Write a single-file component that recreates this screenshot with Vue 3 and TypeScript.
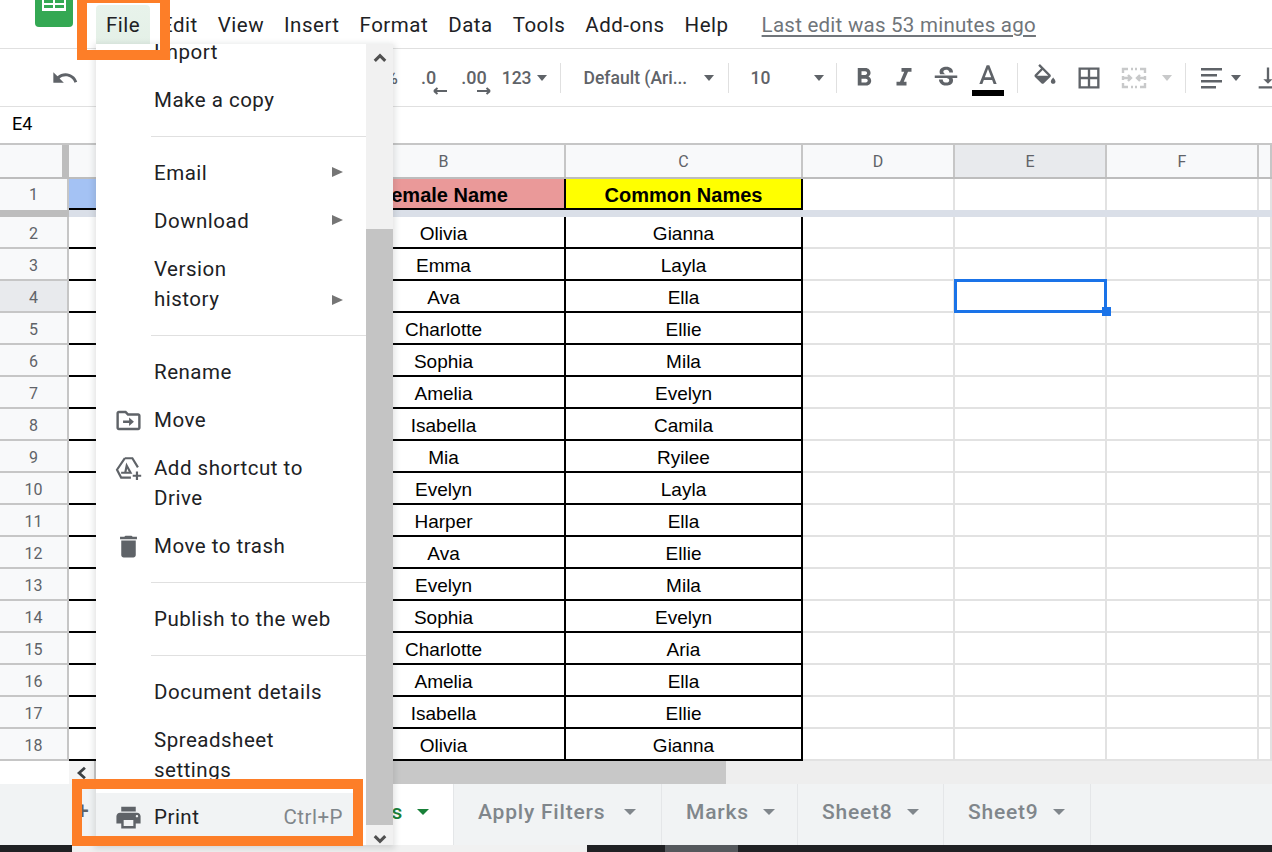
<script setup lang="ts">
const menus = ['Edit', 'View', 'Insert', 'Format', 'Data', 'Tools', 'Add-ons', 'Help']

const columns = ['', 'B', 'C', 'D', 'E', 'F', '']

const people: [string, string][] = [
  ['Olivia', 'Gianna'], ['Emma', 'Layla'], ['Ava', 'Ella'], ['Charlotte', 'Ellie'],
  ['Sophia', 'Mila'], ['Amelia', 'Evelyn'], ['Isabella', 'Camila'], ['Mia', 'Ryilee'],
  ['Evelyn', 'Layla'], ['Harper', 'Ella'], ['Ava', 'Ellie'], ['Evelyn', 'Mila'],
  ['Sophia', 'Evelyn'], ['Charlotte', 'Aria'], ['Amelia', 'Ella'], ['Isabella', 'Ellie'],
  ['Olivia', 'Gianna'],
]

const sheets = [
  { name: 'Apply Filters', width: 208, gap: 19 },
  { name: 'Marks', width: 136, gap: 14 },
  { name: 'Sheet8', width: 146, gap: 14 },
  { name: 'Sheet9', width: 147, gap: 14 },
]
</script>

<template>
  <div class="app">
    <header class="menubar">
      <div class="logo"><div class="logo-grid"><span /><span /><span /><span /></div></div>
      <div class="menu-file">File</div>
      <nav class="menu-list">
        <span v-for="m in menus" :key="m">{{ m }}</span>
      </nav>
      <a class="last-edit">Last edit was 53 minutes ago</a>
    </header>

    <div class="toolbar">
      <svg class="ico undo" viewBox="0 0 24 24"><path d="M12.5 8c-2.65 0-5.05.99-6.9 2.6L2 7v9h9l-3.62-3.62c1.39-1.16 3.16-1.88 5.12-1.88 3.54 0 6.55 2.31 7.6 5.5l2.37-.78C21.08 11.03 17.15 8 12.5 8z" /></svg>
      <span class="tb-text percent">%</span>
      <div class="decimal dec-less">.0<svg viewBox="0 0 14 8"><path d="M1 4h13M1 4l3.500-3M1 4l3.500 3" /></svg></div>
      <div class="decimal dec-more">.00<svg viewBox="0 0 14 8"><path d="M0 4h13M13 4L9.500 1M13 4L9.500 7" /></svg></div>
      <span class="tb-text num">123</span>
      <i class="caret caret-num" />
      <i class="tb-sep sep-a" />
      <span class="tb-text font">Default (Ari...</span>
      <i class="caret caret-font" />
      <i class="tb-sep sep-b" />
      <span class="tb-text size">10</span>
      <i class="caret caret-size" />
      <i class="tb-sep sep-c" />
      <svg class="ico bold" viewBox="0 0 24 24"><path d="M15.6 10.79c.97-.67 1.65-1.77 1.65-2.79 0-2.26-1.75-4-4-4H7v14h7.04c2.09 0 3.71-1.7 3.71-3.79 0-1.52-.86-2.82-2.15-3.42zM10 6.5h3c.83 0 1.5.67 1.5 1.5s-.67 1.5-1.5 1.5h-3v-3zm3.5 9H10v-3h3.5c.83 0 1.5.67 1.5 1.5s-.67 1.5-1.5 1.5z" /></svg>
      <svg class="ico italic" viewBox="0 0 24 24"><path d="M10 4v3h2.210l-3.420 8H6v3h8v-3h-2.210l3.420-8H18V4z" /></svg>
      <svg class="ico strike" viewBox="0 0 24 24"><path d="M6.85 7.08C6.85 4.37 9.45 3 12.24 3c1.64 0 3 .49 3.9 1.28.77.65 1.46 1.73 1.46 3.24h-3.01c0-.31-.05-.59-.15-.85-.29-.86-1.2-1.28-2.25-1.28-1.86 0-2.34 1.02-2.34 1.7 0 .48.25.88.74 1.21.38.25.77.48 1.41.7H7.39c-.21-.34-.54-.89-.54-1.92zM21 12v-2H3v2h9.62c1.15.45 1.96.75 1.96 1.97 0 1-.81 1.67-2.28 1.67-1.54 0-2.93-.54-2.93-2.51H6.4c0 .55.08 1.13.24 1.58.81 2.29 3.29 3.3 5.67 3.3 2.27 0 5.3-.89 5.3-4.05 0-.3-.01-1.16-.48-1.94H21V12z" /></svg>
      <div class="text-color">
        <svg viewBox="0 0 24 18"><path d="M11 1L5.500 15h2.250l1.120-3h6.250l1.120 3h2.250L13 1h-2zm-1.380 9L12 3.670 14.380 10H9.620z" /></svg>
        <i />
      </div>
      <i class="tb-sep sep-d" />
      <svg class="ico fill" viewBox="0 0 24 24"><path d="M16.56 8.94L7.62 0 6.21 1.41l2.38 2.38-5.15 5.15c-.59.59-.59 1.54 0 2.12l5.5 5.5c.29.29.68.44 1.06.44s.77-.15 1.06-.44l5.5-5.5c.59-.58.59-1.53 0-2.12zM5.21 10L10 5.21 14.79 10H5.21zM19 11.5s-2 2.17-2 3.5c0 1.1.9 2 2 2s2-.9 2-2c0-1.33-2-3.5-2-3.5z" /></svg>
      <svg class="ico borders" viewBox="0 0 24 24"><path d="M3 3v18h18V3H3zm8 16H5v-6h6v6zm0-8H5V5h6v6zm8 8h-6v-6h6v6zm0-8h-6V5h6v6z" /></svg>
      <svg class="ico merge" viewBox="0 0 28 24"><path d="M8 3H3v4M20 3h5v4M8 21H3v-4M20 21h5v-4M3 10v4M25 10v4M11 3h2M15 3h2M11 21h2M15 21h2" /><path d="M4 12h7M8 9l3 3-3 3M24 12h-7M20 9l-3 3 3 3" /></svg>
      <i class="caret caret-merge" />
      <i class="tb-sep sep-e" />
      <svg class="ico align" viewBox="0 0 24 24"><path d="M2 2h21v2.400H2zM2 8h16v2.400H2zM2 14h21v2.400H2zM2 20h15v2.400H2z" /></svg>
      <i class="caret caret-align" />
      <svg class="ico valign" viewBox="0 0 24 24"><path d="M16 13h-3V3h-2v10H8l4 4 4-4zM4 19v2h16v-2H4z" /></svg>
    </div>

    <div class="formula-bar">E4</div>

    <div class="row col-head">
      <div class="corner" />
      <div v-for="(c, i) in columns" :key="i" class="col-cell" :class="{ on: c === 'E' }">{{ c }}</div>
    </div>

    <div class="row title-row">
      <div class="row-no">1</div>
      <div class="cell title blue" />
      <div class="cell title pink">Female Name</div>
      <div class="cell title yellow">Common Names</div>
      <div class="cell" /><div class="cell" /><div class="cell" /><div class="cell" />
    </div>
    <div class="freeze-bar"><i /></div>

    <div v-for="(p, i) in people" :key="i" class="row body-row">
      <div class="row-no" :class="{ on: i === 2 }">{{ i + 2 }}</div>
      <div class="cell ruled" />
      <div class="cell ruled">{{ p[0] }}</div>
      <div class="cell ruled right">{{ p[1] }}</div>
      <div class="cell" />
      <div class="cell"><div v-if="i === 2" class="selection" /></div>
      <div class="cell" />
      <div class="cell" />
    </div>

    <div class="hscroll">
      <div class="hscroll-btn"><svg viewBox="0 0 12 12"><path d="M8.500 1.500 3.500 6l5 4.500" /></svg></div>
      <div class="hscroll-thumb" />
    </div>

    <div class="tabbar">
      <span class="add-sheet">+</span>
      <div class="tab active">Common Names<i /></div>
      <div
        v-for="s in sheets"
        :key="s.name"
        class="tab"
        :style="{ width: s.width + 'px', gap: s.gap + 'px' }"
      >{{ s.name }}<i /></div>
    </div>

    <div class="taskbar"><i class="tb-light" /><i class="tb-dark" /><i class="tb-grey" /></div>

    <aside class="file-menu">
      <div class="menu-body">
        <div class="menu-scroll">
          <div class="mi">Import</div>
          <div class="mi">Make a copy</div>
          <hr>
          <div class="mi sub">Email</div>
          <div class="mi sub">Download</div>
          <div class="mi sub tall">Version<br>history</div>
          <hr>
          <div class="mi">Rename</div>
          <div class="mi">
            <svg class="mi-ico" viewBox="0 0 24 24"><path d="M20 6h-8l-2-2H4c-1.100 0-1.990.9-1.990 2L2 18c0 1.100.9 2 2 2h16c1.100 0 2-.9 2-2V8c0-1.100-.9-2-2-2zm0 12H4V6h5.170l2 2H20v10z" /><path d="M7.500 12h5V9.500l4 3.500-4 3.500V14h-5z" /></svg>
            Move
          </div>
          <div class="mi tall">
            <svg class="mi-ico shortcut" viewBox="0 0 24 24"><path d="M9 3.500h6.200l4.600 7.600M9 3.500 2.500 13l3.400 6.500H14M9.500 15.500H5.900M9.300 15.500h4.400L10.500 9.600z" /><path d="M19 14.500v7M15.500 18h7" /></svg>
            Add shortcut to<br>Drive
          </div>
          <div class="mi">
            <svg class="mi-ico" viewBox="0 0 24 24"><path d="M6 19c0 1.100.9 2 2 2h8c1.100 0 2-.9 2-2V7H6v12zM19 4h-3.500l-1-1h-5l-1 1H5v2h14V4z" /></svg>
            Move to trash
          </div>
          <hr>
          <div class="mi">Publish to the web</div>
          <hr>
          <div class="mi">Document details</div>
          <div class="mi tall">Spreadsheet<br>settings</div>
        </div>
        <div class="mi print">
          <svg class="mi-ico" viewBox="0 0 24 24"><path d="M19 8H5c-1.660 0-3 1.340-3 3v6h4v4h12v-4h4v-6c0-1.660-1.340-3-3-3zm-3 11H8v-5h8v5zm3-7c-.55 0-1-.45-1-1s.45-1 1-1 1 .45 1 1-.45 1-1 1zm-1-9H6v4h12V3z" /></svg>
          Print
          <span class="shortcut-key">Ctrl+P</span>
        </div>
      </div>
      <div class="menu-bar">
        <svg viewBox="0 0 12 8"><path d="M1.500 6.500 6 2l4.500 4.500" /></svg>
        <div class="menu-thumb" />
        <svg viewBox="0 0 12 8"><path d="M1.500 1.500 6 6l4.500-4.500" /></svg>
      </div>
    </aside>

    <div class="callout callout-file" />
    <div class="callout callout-print" />
  </div>
</template>

<style scoped>
.app {
  position: relative;
  width: 1272px;
  height: 852px;
  overflow: hidden;
  background: #fff;
  font-family: Roboto, "Liberation Sans", sans-serif;
  color: #202124;
}

.menubar {
  display: flex;
  align-items: flex-start;
  height: 48px;
  border-bottom: 1px solid #e0e0e0;
  font-size: 20.5px;
  letter-spacing: 0.5px;
  line-height: 28px;
}
.logo {
  display: flex;
  justify-content: center;
  width: 38px;
  height: 27px;
  margin: 0 23px 0 35px;
  background: #34a853;
  border-radius: 0 0 4px 4px;
}
.logo-grid {
  display: grid;
  grid-template-columns: 9px 9px;
  grid-template-rows: 3px 3px;
  gap: 2px;
  justify-content: center;
  width: 24px;
  height: 11px;
  background: #fff;
}
.logo-grid span { background: #34a853; }
.menu-file {
  width: 54px;
  height: 39px;
  margin-top: 5px;
  padding: 6px 0 0 10px;
  box-sizing: border-box;
  background: linear-gradient(#e8f3eb, #e4f0e7);
  border-radius: 4px 4px 0 0;
}
.menu-list {
  display: flex;
  gap: 20px;
  margin: 11px 0 0 11px;
}
.last-edit {
  margin: 11px 0 0 33px;
  letter-spacing: 0.25px;
  color: #70757a;
  text-decoration: underline;
  text-underline-offset: 3px;
}

.toolbar {
  display: flex;
  align-items: center;
  height: 57px;
  padding-left: 51px;
  border-bottom: 1px solid #e0e0e0;
  color: #5f6368;
}
.ico { flex: none; width: 28px; height: 28px; fill: #5f6368; }
.tb-text { flex: none; font-size: 17.5px; font-weight: 500; }
.percent { margin-left: 306px; width: 15px; }
.decimal {
  position: relative;
  flex: none;
  font-size: 18px;
  font-weight: 500;
  line-height: 30px;
  height: 30px;
}
.decimal svg {
  position: absolute;
  bottom: -2px;
  width: 14px;
  height: 8px;
  fill: none;
  stroke: #5f6368;
  stroke-width: 2;
}
.dec-less { margin-left: 21px; }
.dec-less svg { left: 12px; }
.dec-more { margin-left: 25px; }
.dec-more svg { left: 16px; }
.num { margin-left: 15px; }
.caret {
  flex: none;
  width: 0;
  height: 0;
  border: 5.5px solid transparent;
  border-top: 6px solid #5f6368;
  border-bottom: 0;
}
.caret-num { margin-left: 5px; }
.tb-sep { flex: none; width: 1px; height: 30px; background: #e0e0e0; }
.sep-a { margin-left: 13px; }
.font { margin-left: 23px; width: 104px; white-space: nowrap; }
.caret-font { margin-left: 16px; }
.sep-b { margin-left: 14px; }
.size { margin-left: 22px; width: 22px; }
.caret-size { margin-left: 41px; }
.sep-c { margin-left: 12px; }
.bold { margin-left: 12px; width: 30px; height: 30px; }
.italic { margin-left: 10px; width: 30px; height: 30px; }
.strike { margin-left: 12px; width: 30px; height: 30px; }
.text-color { flex: none; align-self: flex-start; width: 32px; margin: 15px 0 0 11px; }
.text-color svg { display: block; width: 32px; height: 24px; margin-bottom: 2px; fill: #5f6368; }
.text-color i { display: block; height: 6px; background: #000; }
.sep-d { margin-left: 13px; }
.fill { margin-left: 13px; }
.borders { margin-left: 16.5px; }
.merge { margin-left: 16.5px; fill: none; stroke: #c8c9ca; stroke-width: 2.4; }
.caret-merge { margin-left: 14px; border-top-color: #c8c9ca; }
.sep-e { margin-left: 13px; }
.align { margin-left: 13px; width: 24px; height: 24px; }
.caret-align { margin-left: 8px; }
.valign { margin-left: 13px; }

.formula-bar {
  height: 36px;
  padding-left: 12px;
  line-height: 33px;
  font-size: 18px;
  color: #000;
}

.row {
  display: grid;
  grid-template-columns: 69px 254px 243px 237px 152px 152px 152px 13px;
}
.col-head {
  height: 36px;
  background: #f8f9fa;
  border-top: 2px solid #c6c6c6;
  border-bottom: 2px solid #bdbdbd;
  box-sizing: border-box;
  font-size: 16px;
  color: #5f6368;
}
.corner { border-right: 7px solid #bdbdbd; }
.col-cell {
  display: flex;
  align-items: center;
  justify-content: center;
  border-right: 2px solid #c6c6c6;
}
.col-cell.on { background: #e8eaed; }

.row-no {
  display: flex;
  align-items: center;
  justify-content: center;
  padding-top: 2px;
  box-sizing: border-box;
  background: #f8f9fa;
  border-right: 2px solid #c6c6c6;
  border-bottom: 2px solid #c6c6c6;
  font-size: 16px;
  color: #5f6368;
}
.row-no.on { background: #e8eaed; }
.cell {
  position: relative;
  display: flex;
  align-items: center;
  justify-content: center;
  padding-top: 4px;
  box-sizing: border-box;
  border-right: 2px solid #e2e2e2;
  border-bottom: 2px solid #e2e2e2;
  font-family: "Liberation Sans", Arial, sans-serif;
  font-size: 19px;
  color: #000;
  white-space: nowrap;
}
.title-row { height: 31px; }
.title-row .row-no { border-bottom: 0; padding-top: 0; }
.title-row .cell { border-bottom: 0; }
.title { font-size: 20px; font-weight: 700; border-bottom: 2px solid #000 !important; }
.blue { background: #a4c2f4; border-right: 0; }
.pink { background: #ea9999; border-right: 2px solid #000; }
.yellow { background: #ff0; border-right: 2px solid #000; }
.freeze-bar {
  height: 7px;
  background: #dadfe8;
}
.freeze-bar i { display: block; width: 69px; height: 7px; background: #bdbdbd; }
.body-row { height: 32px; }
.ruled { border-bottom-color: #000; border-right-color: transparent; }
.right { border-right-color: #000; }
.body-row .cell:nth-child(3) { border-right: 2px solid #000; }
.selection {
  position: absolute;
  inset: -2px -2px -2px -1px;
  z-index: 1;
  border: 3px solid #1a73e8;
}
.selection::after {
  content: "";
  position: absolute;
  right: -7px;
  bottom: -6px;
  width: 9px;
  height: 9px;
  background: #1a73e8;
}

.hscroll {
  display: flex;
  height: 23px;
  padding-left: 69px;
  background: #fff;
  box-sizing: border-box;
}
.hscroll-btn {
  width: 25px;
  background: #f5f5f5;
  display: flex;
  align-items: center;
  justify-content: center;
}
.hscroll-btn svg { width: 14px; height: 14px; fill: none; stroke: #3c4043; stroke-width: 2.4; }
.hscroll-thumb {
  width: 632px;
  background: #c8c8c8;
}
.hscroll::after {
  content: "";
  flex: 1;
  background: #eeeeee;
}

.tabbar {
  display: flex;
  height: 61px;
  background: #f1f3f4;
  align-items: stretch;
  font-size: 21px;
  letter-spacing: 0.8px;
  color: #80868b;
  font-weight: 500;
}
.add-sheet {
  width: 169px;
  padding-right: 4px;
  box-sizing: border-box;
  text-align: center;
  line-height: 54px;
  font-size: 24px;
  color: #5f6368;
}
.tab {
  display: flex;
  align-items: center;
  gap: 14px;
  padding: 0 0 5px 24px;
  box-sizing: border-box;
  border-right: 1px solid #e4e6e8;
  white-space: nowrap;
}
.tab i {
  width: 0;
  height: 0;
  border: 6px solid transparent;
  border-top: 6px solid #80868b;
  border-bottom: 0;
}
.tab.active {
  width: 285px;
  justify-content: flex-end;
  padding-right: 24px;
  background: #fff;
  color: #188038;
}
.tab.active i { border-top-color: #188038; }

.taskbar {
  display: flex;
  height: 7px;
  background: #202124;
}
.taskbar i { display: block; height: 7px; }
.tb-light { width: 515px; margin-left: 72px; background: #f1f1f1; }
.tb-dark { width: 78px; }
.tb-grey { width: 73px; background: #55585c; }

.file-menu {
  position: absolute;
  top: 44px;
  left: 96px;
  display: flex;
  width: 297px;
  height: 801px;
  background: #fff;
  box-shadow: 0 2px 6px 2px rgba(60, 64, 67, 0.15);
  font-size: 20.5px;
  letter-spacing: 0.5px;
  color: #202124;
}
.menu-body {
  display: flex;
  flex-direction: column;
  width: 270px;
  overflow: hidden;
}
.menu-scroll {
  flex: 1;
  min-height: 0;
  overflow: hidden;
  margin-top: -16px;
}
.mi {
  position: relative;
  flex: none;
  height: 48px;
  padding-left: 58px;
  line-height: 48px;
  box-sizing: border-box;
  white-space: nowrap;
}
.mi.tall { height: 78px; padding-top: 9px; line-height: 30px; }
.sub::after {
  content: "";
  position: absolute;
  right: 23px;
  top: 18px;
  border-left: 11px solid #757575;
  border-top: 5px solid transparent;
  border-bottom: 5px solid transparent;
}
.tall.sub::after { top: auto; bottom: 18px; }
.menu-scroll hr {
  height: 1px;
  margin: 12px 0 12px 55px;
  border: 0;
  background: #e0e0e0;
}
.mi-ico {
  position: absolute;
  left: 17.5px;
  top: 9.5px;
  width: 29px;
  height: 29px;
  fill: #5f6368;
}
.shortcut { fill: none; stroke: #5f6368; stroke-width: 1.8; }
.print {
  flex: none;
  display: flex;
  width: 259px;
  margin-bottom: 4px;
  background: #f1f3f4;
}
.shortcut-key { margin-left: auto; padding-right: 12px; color: #80868b; }
.menu-bar {
  display: flex;
  flex-direction: column;
  align-items: center;
  width: 27px;
  background: #f1f1f1;
}
.menu-bar svg {
  flex: none;
  width: 14px;
  height: 10px;
  margin: 9px 0;
  fill: none;
  stroke: #505050;
  stroke-width: 2.6;
}
.menu-thumb {
  flex: none;
  width: 100%;
  height: 596px;
  margin: 157px 0 0;
  background: #c4c4c4;
}
.callout {
  position: absolute;
  border: 10px solid #fd7e28;
  box-sizing: border-box;
}
.callout-file { left: 77px; top: -7px; width: 93px; height: 67px; }
.callout-print { left: 72px; top: 779px; width: 291px; height: 67px; }
</style>

<style>
body { margin: 0; overflow: hidden; }
</style>
